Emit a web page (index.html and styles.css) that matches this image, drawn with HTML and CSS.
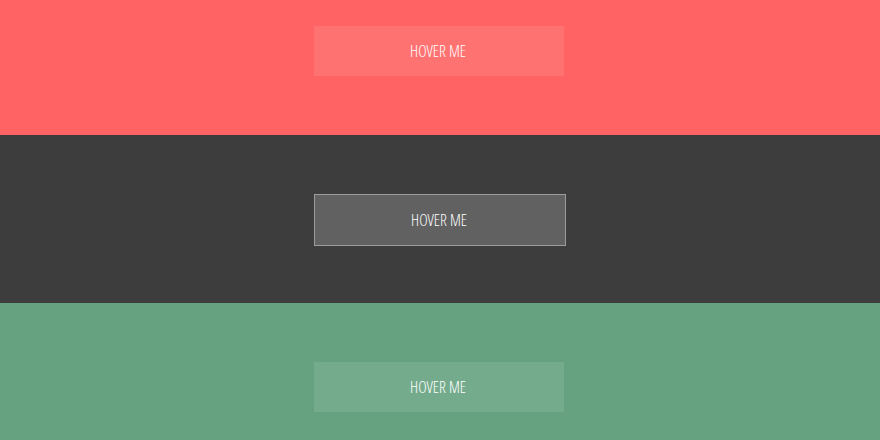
FILE: index.html
```html
<!DOCTYPE html>
<html lang="en">
<head>
<meta charset="utf-8">
<title>Hover buttons</title>
<link rel="stylesheet" href="styles.css">
</head>
<body>
  <section class="band band--red band--first">
    <a class="btn btn--soft" href="#">HOVER ME</a>
  </section>
  <section class="band band--dark">
    <a class="btn btn--outline" href="#">HOVER ME</a>
  </section>
  <section class="band band--green">
    <a class="btn btn--soft" href="#">HOVER ME</a>
  </section>
</body>
</html>
```

FILE: styles.css
```css
html, body {
  margin: 0;
  padding: 0;
}

body {
  font-family: "Open Sans", "Liberation Sans Narrow", "Liberation Sans", sans-serif;
  overflow: hidden;
}

.band {
  height: 168px;
  display: flex;
  align-items: center;
  justify-content: center;
  box-sizing: border-box;
}

.band--first {
  height: 135px;
  align-items: flex-start;
  padding-top: 26px;
}

.band--red { background: #ff6363; }
.band--dark { background: #3d3d3d; padding-top: 1px; }
.band--green { background: #66a280; }

.btn {
  display: flex;
  align-items: center;
  justify-content: center;
  width: 250px;
  height: 50px;
  margin-right: 2px;
  padding-right: 2px;
  box-sizing: border-box;
  color: #fff;
  text-decoration: none;
  font-size: 16px;
  font-weight: 350;
  font-stretch: 75%;
  letter-spacing: 0;
}

.btn--soft {
  background: rgba(255, 255, 255, 0.1);
}

.btn--outline {
  width: 252px;
  height: 52px;
  margin-right: 0;
  background: rgba(255, 255, 255, 0.19);
  border: 1px solid #9c9c9c;
}
```
